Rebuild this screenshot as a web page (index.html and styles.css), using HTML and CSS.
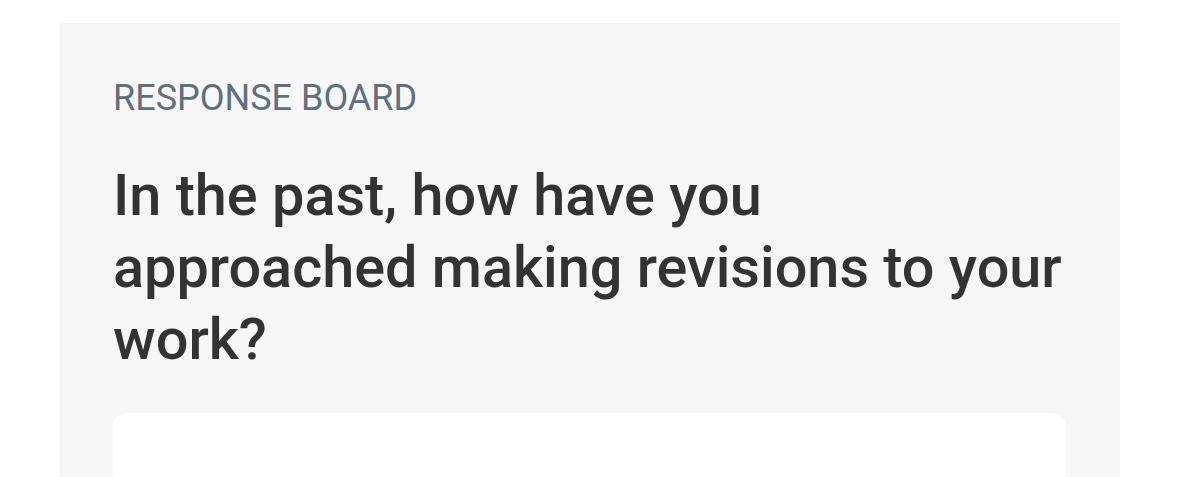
FILE: index.html
```html
<!DOCTYPE html>
<html lang="en">
<head>
    <meta charset="UTF-8">
    <meta name="viewport" content="width=device-width, initial-scale=1.0">
    <title>Response Board</title>
    <link rel="stylesheet" href="styles.css">
</head>
<body>
    <div class="board">
        <div class="board-label">RESPONSE BOARD</div>
        <h1 class="board-question">In the past, how have you approached making revisions to your work?</h1>
        <div class="response-card"></div>
    </div>
</body>
</html>
```

FILE: styles.css
```css
body {
    margin: 0;
    padding: 23px 59px 0 59px;
    background: #ffffff;
    font-family: Roboto, "Liberation Sans", Arial, sans-serif;
}
.board {
    background: #f6f6f6;
    padding: 55px 54px 0 54px;
    height: 454px;
    box-sizing: border-box;
    overflow: hidden;
}
.board-label {
    color: #5f6f7d;
    font-size: 36px;
    line-height: 40px;
}
.board-question {
    margin: 42px 0 0 0;
    color: #333333;
    font-size: 57.6px;
    font-weight: 500;
    line-height: 72px;
}
.response-card {
    margin-top: 37px;
    background: #ffffff;
    border-radius: 14px;
    height: 200px;
}
```
